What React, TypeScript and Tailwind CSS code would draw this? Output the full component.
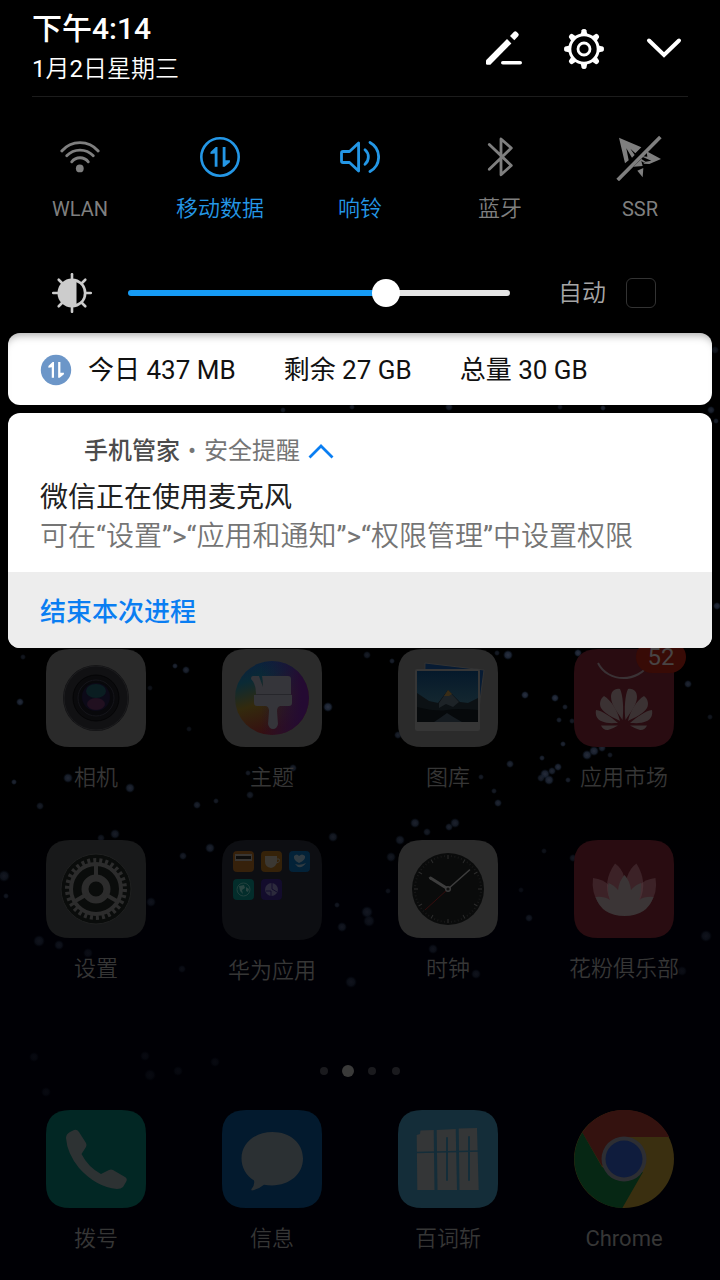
import { useState, type ReactNode } from "react";
import clsx from "clsx";

const STARS: [number, number, number, number][] = [
  [23, 657, 2, 0.5], [20, 702, 3, 0.9], [68, 778, 4, 0.8], [130, 788, 4, 0.8],
  [40, 806, 3, 0.6], [14, 782, 2, 0.8], [175, 666, 2, 0.8], [186, 670, 3, 0.8],
  [328, 707, 4, 1], [250, 795, 3, 0.6], [197, 805, 3, 0.7], [293, 768, 3, 0.7],
  [248, 773, 2, 0.6], [216, 801, 2, 0.6], [189, 729, 2, 0.4], [150, 688, 2, 0.4],
  [508, 655, 4, 1], [497, 653, 2, 0.6], [525, 695, 3, 1], [555, 698, 3, 1],
  [578, 653, 3, 1], [688, 684, 3, 0.8], [398, 735, 3, 0.7], [510, 764, 3, 0.8],
  [545, 774, 4, 0.9], [549, 780, 4, 0.9], [541, 778, 3, 0.7], [552, 771, 3, 0.8],
  [558, 767, 3, 0.9], [587, 755, 4, 0.9], [594, 751, 4, 0.9], [602, 748, 3, 0.8],
  [498, 803, 3, 0.8], [481, 777, 2, 0.6], [565, 707, 2, 0.7], [559, 720, 2, 0.7],
  [563, 744, 2, 0.8], [542, 758, 2, 0.8], [568, 780, 2, 0.7], [494, 791, 2, 0.6],
  [392, 661, 2, 0.7], [367, 655, 3, 0.6], [710, 717, 2, 0.5], [572, 721, 2, 0.6],
  [610, 755, 2, 0.6], [4, 876, 5, 0.5], [6, 896, 2, 0.5], [115, 834, 4, 0.6],
  [101, 838, 3, 0.5], [183, 856, 3, 0.6], [210, 848, 4, 0.7], [333, 837, 4, 0.6],
  [151, 902, 4, 0.4], [39, 941, 5, 0.4], [59, 945, 4, 0.4], [88, 953, 4, 0.3],
  [337, 905, 2, 0.5], [342, 927, 4, 0.5], [351, 982, 5, 0.4], [182, 969, 3, 0.3],
  [415, 823, 4, 0.7], [427, 832, 3, 0.6], [449, 827, 3, 0.7], [455, 823, 4, 0.7],
  [400, 840, 4, 0.6], [391, 857, 4, 0.5], [388, 891, 2, 0.4], [367, 912, 5, 0.5],
  [369, 921, 5, 0.4], [529, 918, 3, 0.5], [433, 949, 4, 0.4], [476, 974, 4, 0.4],
  [706, 936, 5, 0.4], [573, 858, 3, 0.5], [544, 851, 2, 0.4], [521, 890, 2, 0.3],
  [682, 971, 4, 0.3], [717, 606, 3, 0.9], [716, 421, 2, 0.7], [711, 410, 3, 0.8],
  [715, 350, 3, 0.5], [449, 407, 3, 0.7], [603, 408, 2, 0.8], [283, 410, 2, 0.6],
  [352, 407, 2, 0.6], [560, 407, 2, 0.5], [34, 1057, 4, 0.2], [145, 1056, 4, 0.2],
  [150, 1075, 5, 0.2], [178, 1071, 4, 0.2], [215, 1062, 4, 0.2], [46, 1092, 4, 0.2],
];

function Wallpaper() {
  return (
    <svg
      className="absolute inset-0 h-full w-full"
      viewBox="0 0 720 1280"
      preserveAspectRatio="xMidYMin slice"
      aria-hidden="true"
    >
      <defs>
        <radialGradient id="star">
          <stop offset="0" stopColor="#2a3040" />
          <stop offset="0.6" stopColor="#1b2331" />
          <stop offset="1" stopColor="#0b1524" stopOpacity="0" />
        </radialGradient>
      </defs>
      {STARS.map(([x, y, r, o]) => (
        <circle key={`${x}-${y}`} cx={x} cy={y} r={r + 1} opacity={o} fill="url(#star)" />
      ))}
    </svg>
  );
}

/* Status panel icons */

const PencilIcon = () => (
  <svg viewBox="0 0 40 40" className="size-10" fill="currentColor">
    <path d="M2 31.3 23 10l4.4 4.4L6.3 35.7H3.2Q2 35.7 2 34.5Z" />
    <path d="m26 7 3.8-4q1.5-1.4 3 0l1.3 1.3q1.5 1.5 0 3l-3.8 4Z" />
    <rect x="17" y="32" width="21" height="3.6" rx="1.8" />
  </svg>
);

const GearIcon = () => (
  <svg viewBox="0 0 40 40" className="size-10" fill="none" stroke="currentColor">
    <circle cx="20" cy="20" r="14.2" strokeWidth="3" />
    <circle cx="20" cy="20" r="6" strokeWidth="2.8" />
    {[0, 45, 90, 135, 180, 225, 270, 315].map((a) => (
      <path
        key={a}
        d="M16.6 6 17.6 1.2Q17.9 0 20 0t2.4 1.2L23.4 6Z"
        transform={`rotate(${a} 20 20)`}
        fill="currentColor"
        stroke="none"
      />
    ))}
  </svg>
);

const ChevronDownIcon = () => (
  <svg viewBox="0 0 40 40" className="size-10" fill="none" stroke="currentColor">
    <path d="m5 11.5 15 14.5 15-14.5" strokeWidth="4" strokeLinecap="round" />
  </svg>
);

const WifiIcon = () => (
  <svg viewBox="0 0 40 40" className="size-10" fill="none" stroke="currentColor" strokeWidth="2.8" strokeLinecap="round">
    <path d="M1.8 14a24 24 0 0 1 36.4 0" />
    <path d="M6.7 18.8a18.5 18.5 0 0 1 26.6 0" />
    <path d="M11.7 24.8a10.5 10.5 0 0 1 16.6 0" />
    <circle cx="19.8" cy="31.4" r="3.9" fill="currentColor" stroke="none" />
  </svg>
);

const DataArrows = () => (
  <g fill="currentColor" stroke="none">
    <path d="M14.7 29.7V16.5l-4.2.6v-2L15.8 10h1.7v19.7Z" />
    <path d="M25.5 10v13.3h4.4v1.9l-5.3 4.5h-1.9V10Z" />
  </g>
);

const DataIcon = () => (
  <svg viewBox="0 0 40 40" className="size-10" fill="none" stroke="currentColor">
    <circle cx="20" cy="20" r="18.7" strokeWidth="2.6" />
    <DataArrows />
  </svg>
);

const SoundIcon = () => (
  <svg
    viewBox="0 0 40 40"
    className="size-10"
    fill="none"
    stroke="currentColor"
    strokeWidth="2.8"
    strokeLinecap="round"
    strokeLinejoin="round"
  >
    <path d="M3 14.5h6.5L18.6 6v28L9.5 25.5H3q-1.5 0-1.5-1.5v-8q0-1.5 1.5-1.5Z" />
    <path d="M25 12.8a9.5 9.5 0 0 1 0 14.5" />
    <path d="M30 5.5c11.5 6.5 11.5 22.5 0 29" />
  </svg>
);

const BluetoothIcon = () => (
  <svg
    viewBox="0 0 40 40"
    className="size-10"
    fill="none"
    stroke="currentColor"
    strokeWidth="2.8"
    strokeLinecap="round"
    strokeLinejoin="round"
  >
    <path d="M9.3 7.5 31.3 28.5 21 37.8V2l10.3 9L9.3 32.3" />
  </svg>
);

const SsrIcon = () => (
  <svg viewBox="0 0 144 144" className="-my-1 size-12" fill="currentColor">
    <path d="M9 14 76 43 58 61 43 47 56 66 48 74 31 46 38 82 27 91Z" />
    <path d="m92 55 43 23-35 15-18-1 7-6 17-3-24-10-3-3 15 1Z" />
    <path d="M52 101 76 78l14 9-6 2-8-5 4 15Z" />
    <path d="m64 113 18-8-2 28Z" />
    <path d="M5 141 133 12" stroke="currentColor" strokeWidth="11" />
  </svg>
);

const BrightnessIcon = () => (
  <svg viewBox="0 0 40 40" className="size-10 shrink-0 text-[#cccccc]" fill="currentColor">
    <circle cx="20" cy="20" r="14.5" />
    {[0, 45, 90, 135, 180, 225, 270, 315].map((a) => (
      <path
        key={a}
        d="M20 1.2V8"
        transform={`rotate(${a} 20 20)`}
        stroke="currentColor"
        strokeWidth="2.6"
        strokeLinecap="round"
      />
    ))}
    <path d="M24.5 9.3a11.5 11.5 0 0 1 0 21.4Z" fill="#000" />
  </svg>
);

const toggles = [
  { label: "WLAN", icon: <WifiIcon />, on: false, latin: true },
  { label: "移动数据", icon: <DataIcon />, on: true },
  { label: "响铃", icon: <SoundIcon />, on: true },
  { label: "蓝牙", icon: <BluetoothIcon />, on: false },
  { label: "SSR", icon: <SsrIcon />, on: false, latin: true },
];

/* Launcher icons, all on a 100x98 plate */

function Plate({ fill, children }: { fill: string; children: ReactNode }) {
  return (
    <svg viewBox="0 0 100 98" className="h-[98px] w-[100px]">
      <path
        d="M24 0H76Q100 0 100 24V74Q100 98 76 98H24Q0 98 0 74V24Q0 0 24 0Z"
        fill={fill}
      />
      {children}
    </svg>
  );
}

const CameraApp = () => (
  <Plate fill="#2a2a2a">
    <circle cx="50" cy="49" r="33" fill="#111113" />
    <circle cx="50" cy="49" r="32" fill="none" stroke="#1c1c1e" />
    <circle cx="50" cy="49" r="23" fill="#0a0a0c" stroke="#050506" />
    <circle cx="50" cy="49" r="18" fill="#08080b" stroke="#15151a" />
    <circle cx="50" cy="48" r="14" fill="#0c0a18" />
    <ellipse cx="50" cy="42" rx="10" ry="7" fill="#0a1d21" />
    <ellipse cx="50" cy="55" rx="9" ry="6" fill="#211020" />
  </Plate>
);

const ThemeApp = () => (
  <Plate fill="#2b2b2b">
    <defs>
      <linearGradient id="themeLeft" x1="0" y1="0" x2="0.3" y2="1">
        <stop offset="0" stopColor="#0b1d3f" />
        <stop offset="0.3" stopColor="#0a2a35" />
        <stop offset="0.62" stopColor="#332a0d" />
        <stop offset="1" stopColor="#360f11" />
      </linearGradient>
      <linearGradient id="themeRight" x1="0" y1="0" x2="1" y2="0">
        <stop offset="0.35" stopColor="#1c0f40" stopOpacity="0" />
        <stop offset="0.9" stopColor="#240a32" />
      </linearGradient>
    </defs>
    <circle cx="50" cy="49" r="37" fill="url(#themeLeft)" />
    <circle cx="50" cy="49" r="37" fill="url(#themeRight)" />
    <path
      d="M31 27h6q2 6 4 11 0-6-1-11h26q3 0 3 3v15H34q0-10-5-15 0-3 2-3Z M32 46h38v8q0 3-3 3h-9q-3 1-3 5l1 13q-1 5-5 5t-5-5l1-13q0-4-3-5h-9q-3 0-3-3Z"
      fill="#35353a"
    />
    <path d="M34 45.5h35" stroke="#26262b" strokeWidth="1" />
  </Plate>
);

const GalleryApp = () => (
  <Plate fill="#2b2b2b">
    <defs>
      <linearGradient id="dusk" x1="0" y1="0" x2="0" y2="1">
        <stop offset="0" stopColor="#05192b" />
        <stop offset="0.6" stopColor="#13262f" />
        <stop offset="1" stopColor="#1f2620" />
      </linearGradient>
    </defs>
    <path d="m27 14 59 7-6 46-54-6Z" fill="#071b33" stroke="#333" />
    <rect x="17" y="20" width="65" height="62" rx="2" fill="#363636" />
    <rect x="19" y="22" width="61" height="51" fill="url(#dusk)" />
    <path d="m19 44 12 8 9 2 10-13 12 12 8 1 10-5v24H19Z" fill="#0c1114" />
    <path d="m41 54 9-13 11 12-6 5-7-3-7 4Z" fill="#1d2327" />
    <path d="m46 47 4-6 4 4-3 2Z" fill="#3a2d16" />
    <path d="M19 58q20 5 30 3t31 0v12H19Z" fill="#06090b" />
    <path d="m42 69 7-5 8 5 7 4H36Z" fill="#151b20" />
  </Plate>
);

const Petals = () => (
  <>
    <path d="M51.5 71C50 60 51 46 54 40 60 39 63 43 63 48 63 56 56 64 51.5 71Z" />
    <path d="M54 72C56 62 63 51 70 47 74 50 75 55 73 59 69 65 60 69 54 72Z" />
    <path d="M56 74C63 68 71 62 78 61 79 66 77 70 73 72 67 75 61 74 56 74Z" />
    <path d="M56 76.5H73C72 79 69 81.5 66 81 62 80 59 78 56 76.5Z" />
  </>
);

const MarketApp = () => (
  <Plate fill="#290c11">
    <path d="M24 14C34 34 64 34 76 14" fill="none" stroke="#3a3235" strokeWidth="2" />
    <g fill="#3b3233">
      <Petals />
      <g transform="matrix(-1 0 0 1 100 0)">
        <Petals />
      </g>
    </g>
  </Plate>
);

const SettingsApp = () => (
  <Plate fill="#18191a">
    <circle cx="50" cy="49" r="35" fill="#0a0c0b" stroke="#1f2020" />
    <g fill="none" stroke="#2c2c2c">
      <circle cx="50" cy="49" r="28.5" strokeWidth="5" strokeDasharray="3 2.97" />
      <circle cx="50" cy="49" r="25" strokeWidth="4" />
      <circle cx="50" cy="49" r="11" strokeWidth="7" />
      {[0, 120, 240].map((a) => (
        <path key={a} d="M50 39V25" strokeWidth="4" transform={`rotate(${a} 50 49)`} />
      ))}
    </g>
  </Plate>
);

const FolderApp = () => (
  <svg viewBox="0 0 100 100" className="h-[100px] w-[100px]">
    <path
      d="M24 0H76Q100 0 100 24V76Q100 100 76 100H24Q0 100 0 76V24Q0 0 24 0Z"
      fill="#0d0e12"
    />
    <rect x="11" y="11" width="21" height="21" rx="4" fill="#36210b" />
    <path d="M13 14h17v7H13Z" fill="#393633" />
    <path d="M14 16h15v3H14Z" fill="#0e0d0c" />
    <rect x="39" y="11" width="21" height="21" rx="4" fill="#352209" />
    <path d="M43 16h12v6q-1 5-6 6-6-1-6-6Z" fill="#3b3833" />
    <path d="M55 19h2q2 3-3 4" fill="none" stroke="#3b3833" />
    <rect x="67" y="11" width="21" height="21" rx="4" fill="#032238" />
    <path d="M77 23q-6-3-5-7 3-3 5 0 3-3 6 0 1 4-6 7Zm-4 1q5 2 11-1-3 5-8 4Z" fill="#303b42" />
    <rect x="11" y="39" width="21" height="21" rx="4" fill="#032d2b" />
    <circle cx="21.5" cy="49.5" r="6.5" fill="none" stroke="#21403d" />
    <path d="m17 46 5-1 1 3-3 2 1 4-3-3Zm7 1 3 2-1 3-2-1Z" fill="#2a4542" />
    <rect x="39" y="39" width="21" height="21" rx="4" fill="#130c2c" />
    <circle cx="49.5" cy="49.5" r="6.5" fill="#2c2a3c" />
    <path d="M50 43v6l5 3M44 51h5v5" fill="none" stroke="#130c2c" />
  </svg>
);

const ClockApp = () => (
  <Plate fill="#2b2b2b">
    <circle cx="50" cy="49" r="36" fill="#0a0b0b" />
    {Array.from({ length: 60 }, (_, i) => (
      <path
        key={i}
        d={i % 5 ? "M50 15v2" : "M50 15v4"}
        stroke={i % 5 ? "#181818" : "#2c2c2c"}
        transform={`rotate(${i * 6} 50 49)`}
      />
    ))}
    <path d="m50 49-23 21" stroke="#360d0d" strokeWidth="1" />
    <path d="m50 49 21.5-19" stroke="#3d3d3d" strokeWidth="1.6" strokeLinecap="round" />
    <path d="m50 49-17.5-11" stroke="#3d3d3d" strokeWidth="3" strokeLinecap="round" />
    <circle cx="50" cy="49" r="2.3" fill="#111" stroke="#3d3d3d" strokeWidth="1.4" />
  </Plate>
);

const LotusApp = () => (
  <Plate fill="#290c11">
    <g fill="#5a4448" fillOpacity="0.4">
      <path d="M41 23.5Q54 32 52 60H36Q28 42 41 23.5Z" />
      <path d="M62.5 23.5Q50 32 50 60H66Q74 42 62.5 23.5Z" />
      <path d="M19 38Q40 40 44 66L25 64Q17 52 19 38Z" />
      <path d="M81.5 38Q60 40 57 66L76 64Q84 52 81.5 38Z" />
    </g>
    <path
      d="M50.5 35Q56 41 57 50 61 45 67 43 68 52 65 60 71 56 79.5 57 73 76 50.5 76 28 76 21.5 57 30 56 36 60 33 52 34.5 43 40 45 44 50 45 41 50.5 35Z"
      fill="#3b3536"
    />
  </Plate>
);

const PhoneApp = () => (
  <Plate fill="#022724">
    <path
      d="M20 28Q20 24 24 22L28 20Q31 19 33 22L40 33Q41 35 40 37L35.5 44Q42 57 55 64L63 60Q65 59 67 60L79 67Q82 69 80 72L77 77Q75 79 71 79 50 77 33 58 21 43 20 28Z"
      fill="#2d3233"
    />
  </Plate>
);

const MessageApp = () => (
  <Plate fill="#031a2e">
    <path
      d="M50.5 22C68 22 81 33 81 48.5S68 75 50 75.5Q46 75.5 42 74.8 37 79 30 80.5 29 80.5 29.5 79 33 75 32 70.5C24 66 19.5 57 19.5 48.5 19.5 33 33 22 50.5 22Z"
      fill="#2b3033"
    />
  </Plate>
);

const WordsApp = () => (
  <Plate fill="#142d39">
    <g fill="#343637">
      <path d="M18.7 25 22 24 22.5 20.5 35.7 20 36.5 80H19.3Z" />
      <path d="M38.7 20 57.7 19 59 80H39.5Z" />
      <path d="M60.7 18.5 79 18 80.7 80H61.5Z" />
    </g>
    <path d="M49 28V70M71 27V70" stroke="#142d39" strokeWidth="2" strokeLinecap="round" />
    <path d="M18 42.5 82 41" stroke="#142d39" strokeWidth="1.5" />
  </Plate>
);

const ChromeApp = () => (
  <svg viewBox="0 0 100 98" className="h-[98px] w-[100px]">
    <ellipse cx="50" cy="49" rx="50" ry="49" fill="#3a2f10" />
    <path d="M8.3 22.5A50 49 0 0 1 95.3 27H50L28 56Z" fill="#34120f" />
    <path d="M8.3 22.5 28 57 50 66 69 62 48.3 98A50 49 0 0 1 8.3 22.5Z" fill="#062714" />
    <circle cx="50" cy="49" r="22.5" fill="#2d2e33" />
    <circle cx="50" cy="49" r="18.5" fill="#0f1c3d" />
  </svg>
);

type App = { name: string; icon: ReactNode; badge?: number };

const homeApps: App[] = [
  { name: "相机", icon: <CameraApp /> },
  { name: "主题", icon: <ThemeApp /> },
  { name: "图库", icon: <GalleryApp /> },
  { name: "应用市场", icon: <MarketApp />, badge: 52 },
  { name: "设置", icon: <SettingsApp /> },
  { name: "华为应用", icon: <FolderApp /> },
  { name: "时钟", icon: <ClockApp /> },
  { name: "花粉俱乐部", icon: <LotusApp /> },
];

const dockApps: App[] = [
  { name: "拨号", icon: <PhoneApp /> },
  { name: "信息", icon: <MessageApp /> },
  { name: "百词斩", icon: <WordsApp /> },
  { name: "Chrome", icon: <ChromeApp /> },
];

function AppButton({ app }: { app: App }) {
  return (
    <button type="button" className="flex flex-col items-center justify-self-center">
      <span className="relative">
        {app.icon}
        {app.badge && (
          <span className="absolute -top-2 -right-3 flex h-8 w-[50px] items-center justify-center rounded-full bg-[#380b06] text-[24px] leading-8 text-[#484444]">
            {app.badge}
          </span>
        )}
      </span>
      <span className="mt-[15px] font-[Roboto,'Noto_Sans_CJK_SC_DemiLight','Noto_Sans_CJK_SC',sans-serif] text-[22px] leading-8 whitespace-nowrap text-[#363636]">
        {app.name}
      </span>
    </button>
  );
}

export default function App() {
  const [brightness, setBrightness] = useState(69);
  const [auto, setAuto] = useState(false);

  return (
    <div className="relative flex min-h-screen flex-col overflow-hidden bg-linear-to-b from-black from-55% to-[#000005] to-70% font-[Roboto,'Noto_Sans_CJK_SC',sans-serif]">
      <Wallpaper />

      {/* Quick settings */}
      <section className="relative bg-black pb-5">
        <header className="mx-8 flex items-center justify-between border-b border-[#1c1c1c] pt-2 pb-1.5 text-white">
          <div>
            <p className="text-[30px] leading-[41px] font-medium">下午4:14</p>
            <p className="font-[Roboto,'Noto_Sans_CJK_SC_DemiLight','Noto_Sans_CJK_SC',sans-serif] text-[24px] leading-[41px]">
              1月2日星期三
            </p>
          </div>
          <div className="mr-1 flex gap-10">
            <button type="button" aria-label="编辑">
              <PencilIcon />
            </button>
            <button type="button" aria-label="设置">
              <GearIcon />
            </button>
            <button type="button" aria-label="展开">
              <ChevronDownIcon />
            </button>
          </div>
        </header>

        <div className="grid grid-cols-5 px-[10px] pt-10">
          {toggles.map((t) => (
            <button
              key={t.label}
              type="button"
              aria-pressed={t.on}
              className={clsx(
                "flex flex-col items-center gap-4",
                t.on ? "text-[#2497e6]" : "text-[#7f7f7f]",
              )}
            >
              {t.icon}
              <span className={clsx("leading-8", t.latin ? "text-[20px]" : "text-[22px] font-[350]")}>
                {t.label}
              </span>
            </button>
          ))}
        </div>

        <div className="mt-12 flex h-10 items-center pr-16 pl-[52px]">
          <BrightnessIcon />
          <input
            type="range"
            aria-label="亮度"
            value={brightness}
            onChange={(e) => setBrightness(Number(e.target.value))}
            className="ml-9 h-1.5 min-w-0 flex-1 appearance-none rounded-full [&::-webkit-slider-thumb]:size-7 [&::-webkit-slider-thumb]:appearance-none [&::-webkit-slider-thumb]:rounded-full [&::-webkit-slider-thumb]:bg-white"
            style={{
              background: `linear-gradient(to right, #169bf5 calc(14px + (100% - 28px) * ${brightness / 100}), #e6e6e6 0)`,
            }}
          />
          <label className="ml-12 flex items-center gap-5 text-[24px] leading-10 font-[350] text-[#a6a6a6]">
            自动
            <input
              type="checkbox"
              checked={auto}
              onChange={(e) => setAuto(e.target.checked)}
              className="size-[30px] appearance-none rounded-md border border-[#333333] checked:bg-[#169bf5]"
            />
          </label>
        </div>
      </section>

      {/* Notifications */}
      <main className="relative z-10 flex flex-col gap-2 px-2">
        <section className="flex h-[72px] items-center gap-12 rounded-xl bg-white px-8 pt-0.5 text-[26px] leading-10 text-[#111111] shadow-[inset_0_8px_8px_-6px_rgba(0,0,0,0.35)]">
          <p className="flex items-center gap-4">
            <svg viewBox="0 0 40 40" className="size-8 text-white">
              <circle cx="20" cy="20" r="19" fill="#6c96c8" />
              <DataArrows />
            </svg>
            今日 437 MB
          </p>
          <p>剩余 27 GB</p>
          <p>总量 30 GB</p>
        </section>

        <article className="overflow-hidden rounded-xl bg-white">
          <div className="px-8 pt-5 pb-[15px]">
            <div className="ml-11 flex items-center text-[24px] leading-9 text-[#757575]">
              <span className="font-medium text-[#4c4c4c]">手机管家</span>
              <span className="w-6 text-center">•</span>
              <span>安全提醒</span>
              <button type="button" aria-label="收起" className="ml-2">
                <svg viewBox="0 0 26 18" className="h-[18px] w-[26px]" fill="none" stroke="#0a7ef2">
                  <path d="m1.5 15.5 11.5-11.5 11.5 11.5" strokeWidth="2.8" />
                </svg>
              </button>
            </div>
            <h2 className="mt-2.5 text-[28px] leading-[38px] text-[#212121]">微信正在使用麦克风</h2>
            <p className="font-[Roboto,'Noto_Sans_CJK_SC_DemiLight','Noto_Sans_CJK_SC',sans-serif] text-[28px] leading-10 text-[#757575]">
              可在“设置”&gt;“应用和通知”&gt;“权限管理”中设置权限
            </p>
          </div>
          <div className="flex h-[76px] items-center bg-[#ededed] px-8 pt-1">
            <button type="button" className="text-[26px] leading-10 font-medium text-[#0a7ef2]">
              结束本次进程
            </button>
          </div>
        </article>
      </main>

      {/* Home screen behind the shade */}
      <section className="relative flex flex-1 flex-col px-2 pt-px pb-[25px]">
        <div className="grid grid-cols-4 items-start gap-y-[46px]">
          {homeApps.map((app) => (
            <AppButton key={app.name} app={app} />
          ))}
        </div>
        <div className="mt-auto flex justify-center pt-16 pb-[33px]">
          {[0, 1, 2, 3].map((page) => (
            <span key={page} className="flex h-3 w-6 items-center justify-center">
              <span
                className={clsx(
                  "rounded-full",
                  page === 1 ? "size-3 bg-[#3a3a3a]" : "size-2 bg-[#1a1a1e]",
                )}
              />
            </span>
          ))}
        </div>
        <nav className="grid grid-cols-4">
          {dockApps.map((app) => (
            <AppButton key={app.name} app={app} />
          ))}
        </nav>
      </section>
    </div>
  );
}
